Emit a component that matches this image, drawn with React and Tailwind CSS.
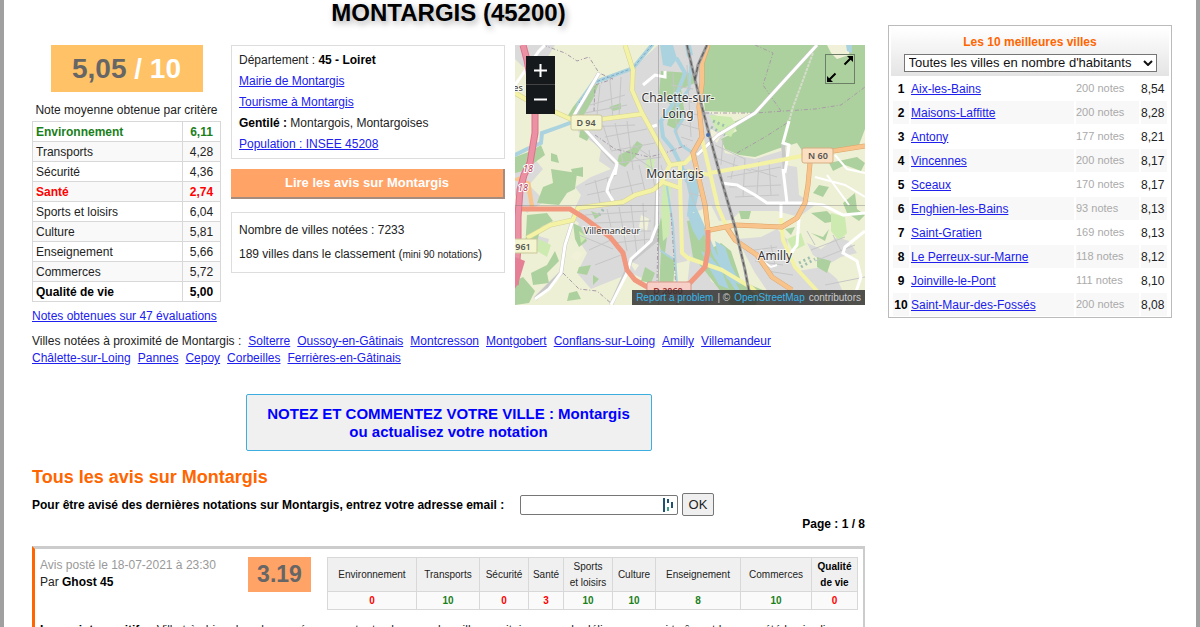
// App.jsx
import React from 'react';

const criteria = [
  { name: 'Environnement', value: '6,11', tone: 'font-bold text-[#1a801a]' },
  { name: 'Transports', value: '4,28' },
  { name: 'Sécurité', value: '4,36' },
  { name: 'Santé', value: '2,74', tone: 'font-bold text-[#ff0000]' },
  { name: 'Sports et loisirs', value: '6,04' },
  { name: 'Culture', value: '5,81' },
  { name: 'Enseignement', value: '5,66' },
  { name: 'Commerces', value: '5,72' },
  { name: 'Qualité de vie', value: '5,00', tone: 'font-bold text-black' },
];

const nearby = [
  'Solterre', 'Oussoy-en-Gâtinais', 'Montcresson', 'Montgobert', 'Conflans-sur-Loing', 'Amilly',
  'Villemandeur', 'Châlette-sur-Loing', 'Pannes', 'Cepoy', 'Corbeilles', 'Ferrières-en-Gâtinais',
];

const ranking = [
  { name: 'Aix-les-Bains', notes: 200, score: '8,54' },
  { name: 'Maisons-Laffitte', notes: 200, score: '8,28' },
  { name: 'Antony', notes: 177, score: '8,21' },
  { name: 'Vincennes', notes: 200, score: '8,17' },
  { name: 'Sceaux', notes: 170, score: '8,17' },
  { name: 'Enghien-les-Bains', notes: 93, score: '8,13' },
  { name: 'Saint-Gratien', notes: 169, score: '8,13' },
  { name: 'Le Perreux-sur-Marne', notes: 118, score: '8,12' },
  { name: 'Joinville-le-Pont', notes: 111, score: '8,10' },
  { name: 'Saint-Maur-des-Fossés', notes: 200, score: '8,08' },
];

const reviewScores = [
  { name: 'Environnement', value: 0, width: 'w-[89px]' },
  { name: 'Transports', value: 10, width: 'w-[63px]' },
  { name: 'Sécurité', value: 0, width: 'w-[49px]' },
  { name: 'Santé', value: 3, width: 'w-[35px]' },
  { name: 'Sports et\u00a0loisirs', value: 10, width: 'w-[49px]' },
  { name: 'Culture', value: 10, width: 'w-[43px]' },
  { name: 'Enseignement', value: 8, width: 'w-[85px]' },
  { name: 'Commerces', value: 10, width: 'w-[71px]' },
  { name: 'Qualité de\u00a0vie', value: 0, width: 'w-[46px]', bold: true },
];

const Link = ({ children, href = '#' }) => (
  <a href={href} className="text-[#2020ee] underline">{children}</a>
);

const ScoreTable = () => (
  <table className="w-full border-collapse leading-4">
    <caption className="pb-[3px] whitespace-nowrap">Note moyenne obtenue par critère</caption>
    <tbody>
      {criteria.map(({ name, value, tone }) => (
        <tr key={name} className={`h-5 even:bg-[#f9f9f9] ${tone || ''}`}>
          <td className="border border-[#d8d8d8] px-[3px] py-0">{name}</td>
          <td className="w-[38px] border border-[#d8d8d8] p-0 text-center">{value}</td>
        </tr>
      ))}
    </tbody>
  </table>
);

const streets = [
  'M75 60L110 50M70 68L112 60M72 82L120 80M85 40L82 70M95 36L98 74M106 32L104 72M88 80L96 105M100 78L108 118M112 76L118 125M90 92L132 84M96 106L140 98M104 118L146 112',
  'M70 140L102 130M72 150L128 138M80 135L85 158M92 132L97 156M112 126L118 150M124 120L130 146M134 105L140 144M146 120L150 136M120 112L144 128M118 100L136 112',
  'M70 170L132 166M80 178L136 176M88 186L136 186M98 198L136 194M92 164L96 182M104 162L112 206M116 160L122 210M128 158L130 206M64 190L98 204M74 205L98 194M80 220L106 210',
  'M200 100L230 114M198 112L236 126M208 94L206 120M220 112L216 134M230 114L228 152M244 116L242 150M254 116L256 150M212 132L266 122M214 142L266 140M220 152L264 150M236 124L262 132',
  'M156 40L178 44M156 52L180 58M160 66L184 70M162 78L184 84M166 92L178 96M158 28L162 90M172 20L176 92M170 130L180 160M174 148L190 152',
  'M232 206L262 202M240 216L268 220M252 226L278 230M256 200L260 220M296 205L330 192M300 216L340 200M292 186L300 200M318 190L326 206M310 240L350 232',
];

const CityMap = () => (
  <svg viewBox="0 0 350 260" preserveAspectRatio="xMidYMid slice" className="block h-full w-full" role="img" aria-label="Carte de Montargis">
    <rect width="350" height="260" fill="#eef0d5" />

    {/* built-up areas */}
    <g fill="#dadada">
      <path d="M78 42L95 32L118 24L130 12L143 0H192L186 30L188 64L200 70L222 82L206 94L210 108L240 114L266 106L270 120L282 122L284 150L300 160L284 172L262 166L226 166L216 175L204 176L196 160L186 165L176 168L180 200L172 216L145 222L142 240L116 228L96 236L76 244L62 228L72 208L60 190L64 178L56 172L66 150L60 142L76 132L96 124L84 116L86 104L76 96L64 88L58 76L64 62Z" />
      <path d="M0 0H40L28 20L8 22L0 14Z" />
      <path d="M0 118L18 112L28 124L14 140L30 156L12 168L0 150Z" />
      <path d="M222 194L246 192L262 184L272 194L274 214L292 236L300 260H262L240 228Z" />
      <path d="M292 198L306 204L322 192L334 196L342 208L326 212L312 220L298 210Z" />
      <path d="M282 226L308 222L322 234L334 260H306Z" />
      <path d="M176 205L190 214L196 236L216 250L190 260H170Z" />
      <path d="M20 190L34 194L30 210L20 204Z" />
    </g>

    {/* forest and parks */}
    <g fill="#add19e">
      <path d="M193 0H350V84L344 100L322 104L290 110L282 98L262 104L240 112L224 110L210 104L206 94L222 86L216 78L240 68L190 66L186 30Z" />
      <path d="M314 118L342 112L350 118L346 126L330 120L318 126Z" />
      <path d="M36 124L62 128L60 144L52 148L44 160L22 158L28 142L38 138Z" />
      <path d="M58 62L72 44L84 38L78 54L70 68L66 74L52 72Z" />
      <path d="M0 112L16 106L26 100L30 110L8 126L0 128Z" />
      <path d="M12 170L32 168L38 176L26 182L20 204L10 206Z" />
      <path d="M36 108L42 110L44 118L36 116ZM66 82L76 88L72 96L64 92ZM56 124L68 122L68 132L58 130ZM94 62L106 58L106 64L98 66Z" />
      <path d="M16 228L32 220L40 206L44 216L32 228L34 238L18 240ZM0 236L8 232L20 246L14 258L0 260Z" />
      <path d="M58 178L66 182L72 196L64 202L60 194ZM64 222L76 220L72 230L62 228ZM54 248L62 246L66 254L52 256ZM76 166L86 170L80 174ZM130 222L140 228L136 238L126 236ZM78 230L84 234L78 240Z" />
      <path d="M146 172L152 192L150 208L160 214L158 244L144 244L146 206L142 190Z" />
      <path d="M172 176L184 174L190 186L192 206L206 198L216 206L226 236L250 246L240 260H216L190 226L178 212Z" />
      <path d="M296 168L312 166L322 176L310 178ZM328 158L340 148L342 164L350 170L344 176L332 168ZM270 184L280 182L276 190ZM296 188L308 192L314 184L310 196ZM302 212L316 216L312 228L302 222ZM304 140L314 142L308 152L298 148ZM224 166L236 166L234 174L226 174Z" />
      <path d="M104 110L116 104L122 96L128 100L120 112L110 122L102 118ZM146 26L176 28L180 38L166 44L170 70L160 84L152 80L156 60L144 50Z" />
    </g>
    <g fill="#cdebb0">
      <path d="M194 70L216 72L222 80L216 92L202 86ZM316 168L330 172L332 188L324 196L316 186ZM272 194L286 188L290 200L278 206ZM148 140L156 140L154 190L148 196L146 166Z" />
      <path d="M24 194L36 200L32 212L22 206ZM64 186L72 192L66 198ZM132 112L140 114L138 126L130 122Z" />
    </g>
    <g fill="#f0f1d8">
      <path d="M312 0H335L334 10L322 14L316 8ZM126 170L134 174L132 186L124 182ZM106 182L114 186L110 192L104 188ZM60 206L68 208L62 216L56 212ZM114 216L124 220L120 226ZM196 84L206 90L202 98L194 92Z" />
    </g>
    <g stroke="#9fbfae" strokeWidth="3" strokeDasharray="2 3">
      <path d="M198 76L212 82M196 82L210 90M284 218L296 212M286 222L300 214M84 170L90 162M40 68L52 72" />
    </g>

    {/* water */}
    <g fill="#aad3df">
      <path d="M145 0H158L162 14L156 22L148 20ZM170 0H176L178 10L172 12ZM331 0H337V8L332 6Z" />
      <path d="M168 124L180 126L184 146L180 166L172 172L174 150Z" />
      <path d="M172 168L180 168L188 180L190 188L184 196L178 186ZM200 196L210 202L216 220L226 240L212 234L204 216Z" />
      <path d="M186 206L194 210L206 224L214 244L204 240L196 226Z" />
    </g>
    <g fill="none" stroke="#aad3df" strokeLinecap="round">
      <path d="M137 0L118 23L78 38L64 58L60 76L44 82L27 88L26 98L12 104L0 110" strokeWidth="4" />
      <path d="M162 14L170 28L164 44L156 62L146 76L148 92L158 104L166 120L172 136" strokeWidth="4" />
      <path d="M176 16L174 44L162 60L168 74L160 86L166 100L178 108" strokeWidth="3" />
      <path d="M178 160L188 182L200 210L222 244" strokeWidth="4" />
      <path d="M152 142L158 180L162 240M146 206L158 214" strokeWidth="2" />
    </g>
    <path d="M137 0L118 23L78 38L64 58" fill="none" stroke="#7da7c4" strokeDasharray="3 2" />

    {/* streets */}
    <g fill="none" stroke="#c6c6c6" strokeWidth="1">
      {streets.map((d) => <path key={d} d={d} />)}
    </g>
    <g fill="none" stroke="#a89ba8" strokeWidth="1" strokeDasharray="4 2 1 2">
      <path d="M28 0L50 8L62 16L74 12L84 28L98 34L80 40L79 66M80 90L100 104L134 112L150 108L172 100" />
      <path d="M240 0L258 8L248 40L266 66M190 68L240 68L300 64L326 60L350 42M222 108L250 92L272 78" />
      <path d="M48 228L64 244L82 246L98 260M144 130L142 240M156 168L162 260" />
    </g>

    {/* minor roads */}
    <g fill="none" stroke="#c8c8c8" strokeWidth="4">
      <path d="M302 0L240 68L203 90L182 110M268 98L270 128M60 70L84 28M66 80L100 118" />
      <path d="M58 175L50 200L46 228L20 254M143 128L140 196L116 216L96 260" />
    </g>
    <path d="M298 8L278 62L272 84" fill="none" stroke="#d5dccb" strokeWidth="2" strokeDasharray="3 1" />
    <g fill="none" stroke="#fff" strokeWidth="3">
      <path d="M302 0L240 68L203 90L182 110M274 76L268 98L274 100L270 128" />
      <path d="M0 40L24 6L30 0M58 72L70 52L84 28M66 80L88 104L102 118L100 130" />
      <path d="M58 175L50 200L46 228L34 244L20 254M102 120L94 138L92 146L98 156" />
      <path d="M143 128L142 180L136 196L116 214L112 228L96 260M128 40L140 30L150 32L150 26M128 70L136 82L142 80" />
      <path d="M206 138L222 140L240 150L252 158L290 158L308 160L328 170L350 168M266 158V174M268 124L272 158" />
      <path d="M284 174L282 200L276 208M350 186L330 202L328 208L342 216L346 232L340 250" />
      <path d="M242 212L256 222L262 220M300 132L330 140L350 152M312 130L334 160M320 110L332 124L350 128" strokeWidth="2" />
    </g>

    {/* yellow and orange roads */}
    <g fill="none" stroke="#d6d19a" strokeWidth="5">
      <path d="M0 48L12 55L40 67L58 75L88 74L127 69M110 0L118 25L117 45L127 68L138 88L155 120L170 118M12 193L35 180L58 175L63 163L108 157L120 150L138 145L148 137L165 143" />
    </g>
    <g fill="none" stroke="#f4f2a4" strokeWidth="4" strokeLinejoin="round">
      <path d="M0 48L12 55L40 67L58 75L88 74L127 69M110 0L118 25L117 45L127 68L138 88L155 120L170 118L180 108" />
      <path d="M12 193L35 180L58 175L63 163L108 157L120 150L138 145L148 137L165 143M165 118V138L167 208L173 213L207 225L237 243L250 256" />
      <path d="M155 120L146 138M195 128L240 120L287 111M186 90L196 132L203 162L212 183M266 173L268 195L280 222L303 247L315 260M172 126L196 130" />
    </g>
    <g fill="none" stroke="#dba468" strokeWidth="5">
      <path d="M193 0L187 18V38L184 62L187 92L178 108L183 130L190 160L193 185M350 101L318 106L287 111M295 118L293 140L290 158L282 173L267 182L220 180L190 186M212 183L220 195L242 210L257 232L277 245" />
    </g>
    <g fill="none" stroke="#f8c48c" strokeWidth="4" strokeLinejoin="round">
      <path d="M193 0L187 18V38L184 62L187 92L178 108L183 130L190 160L193 185M350 101L318 106L300 110L295 118L293 140L290 158L282 173L267 182L220 180L190 186M212 183L220 195L242 210L257 232L277 245" />
      <path d="M0 134L14 138L18 164M3 132L14 148L17 166" strokeWidth="3" />
    </g>
    <path d="M0 164L28 164L55 164L68 172L95 192L108 208L112 225L120 235L132 242L152 248L175 238L190 222L193 205V185" fill="none" stroke="#f1987e" strokeWidth="5" />
    <g fill="none" stroke="#e0708a" strokeWidth="7"><path d="M8 0L12 15L20 60V88L15 118L9 130L5 145L3 172V202L0 240" /></g>
    <g fill="none" stroke="#ea92a4" strokeWidth="5"><path d="M8 0L12 15L20 60V88L15 118L9 130L5 145L3 172V202L0 240" /></g>
    <path d="M0 212L10 216L4 236L0 244Z" fill="#e47f96" />

    {/* railways */}
    <g fill="none" stroke="#999" strokeWidth="3"><path d="M172 0L180 35L187 62L205 130L220 182L230 225L234 246M192 0L183 20L180 35" /></g>
    <g fill="none" stroke="#555" strokeDasharray="5 3"><path d="M172 0L180 35L187 62L205 130L220 182L230 225L234 246M192 0L183 20L180 35" /></g>
    <circle cx="193" cy="90" r="2" fill="#4a6ea8" />
    <path d="M0 160.500H350M143.500 0V260" stroke="#777" strokeOpacity=".4" />

    {/* road shields */}
    <g fontFamily="'Noto Sans', sans-serif" fontSize="9" fontWeight="600" textAnchor="middle" fill="#555">
      <rect x="56" y="70" width="31" height="15" rx="2" fill="#f4f5cf" stroke="#c9c79a" />
      <text x="71" y="81">D 94</text>
      <rect x="287" y="103" width="31" height="15" rx="2" fill="#fadfc0" stroke="#d6ae84" />
      <text x="303" y="114">N 60</text>
      <rect x="-4" y="194" width="26" height="14" fill="#f4f5cf" stroke="#c9c79a" />
      <text x="8" y="205">961</text>
      <rect x="132" y="237" width="44" height="15" rx="2" fill="#f8cfc6" stroke="#d8998c" />
      <text x="153" y="249" fill="#933">D 2060</text>
    </g>
    <g fontFamily="'Noto Sans', sans-serif" fontSize="9" fontStyle="italic" fill="#b33c56" stroke="#fff" strokeWidth="2" paintOrder="stroke">
      <text x="8" y="127">18</text>
      <text x="3" y="146">18</text>
    </g>

    {/* place names */}
    <g fontFamily="'Noto Sans', sans-serif" textAnchor="middle" fill="#333" stroke="#fff" strokeOpacity=".7" strokeWidth="2" paintOrder="stroke">
      <text x="163" y="57" fontSize="12">Chalette-sur-</text>
      <text x="163" y="73" fontSize="12">Loing</text>
      <text x="160" y="133" fontSize="12">Montargis</text>
      <text x="260" y="215" fontSize="12">Amilly</text>
      <text x="97" y="189" fontSize="9">Villemandeur</text>
      <text x="3" y="46" fontSize="9">es</text>
    </g>
  </svg>
);

const MapPanel = () => (
  <div className="relative h-[260px] w-[350px] shrink-0 overflow-hidden">
    <CityMap />
    <div className="absolute left-[11px] top-[11px] flex w-[29px] flex-col bg-[#16191c] text-white">
      <button type="button" aria-label="Zoom avant" className="flex h-[29px] items-center justify-center border-b border-[#444]">
        <svg width="13" height="13" viewBox="0 0 13 13" stroke="currentColor" strokeWidth="2"><path d="M6.500 0V13M0 6.500H13" /></svg>
      </button>
      <button type="button" aria-label="Zoom arrière" className="flex h-[29px] items-center justify-center">
        <svg width="13" height="13" viewBox="0 0 13 13" stroke="currentColor" strokeWidth="2"><path d="M0 6.500H13" /></svg>
      </button>
    </div>
    <button type="button" aria-label="Agrandir la carte" className="absolute right-[10px] top-[9px] size-[30px] border border-[#6d7f66]">
      <svg viewBox="0 0 28 28" className="h-full w-full" fill="#000" stroke="#000">
        <path d="M18.500 9.500L25 3M9.500 18.500L3 25" strokeWidth="2" fill="none" />
        <path d="M21 1H27V7ZM1 21V27H7Z" stroke="none" />
      </svg>
    </button>
    <div className="absolute bottom-0 right-0 flex h-[15px] items-center gap-1 whitespace-nowrap bg-[#333]/85 px-1 text-[10px] leading-[15px] text-[#ccc]">
      <a href="#" className="text-[#38b5ea]">Report a problem</a>
      <span>| ©</span>
      <a href="#" className="text-[#38b5ea]">OpenStreetMap</a>
      <span>contributors</span>
    </div>
  </div>
);

const CityInfo = () => (
  <div className="flex min-w-0 flex-1 flex-col">
    <div className="border border-[#ddd] px-[7px] pt-1 pb-[3px] leading-[21px]">
      <p>Département : <b className="text-black">45 - Loiret</b></p>
      <p><Link>Mairie de Montargis</Link></p>
      <p><Link>Tourisme à Montargis</Link></p>
      <p><b className="text-black">Gentilé :</b> Montargois, Montargoises</p>
      <p><Link>Population : INSEE 45208</Link></p>
    </div>
    <button type="button" className="mt-[10px] h-[30px] border-r-2 border-b-2 border-solid border-[#a58c7d] bg-[#ffa366] text-[13px] font-bold text-white">
      Lire les avis sur Montargis
    </button>
    <div className="mt-[13px] border border-[#ddd] px-[7px] py-[5px] leading-6">
      <p>Nombre de villes notées : 7233</p>
      <p className="whitespace-nowrap">189 villes dans le classement (<span className="text-[10px]">mini 90 notations</span>)</p>
    </div>
  </div>
);

const TopCities = () => (
  <aside className="mt-[25px] w-[284px] shrink-0 self-start border border-[#bbb] px-[2px] pt-[2px]">
    <div className="flex flex-col items-center bg-gradient-to-b from-white to-[#e4e4e4] pt-1 pb-1">
      <h2 className="font-bold leading-5 text-[#ff6600]">Les 10 meilleures villes</h2>
      <div className="relative mt-[2px] w-[253px]">
        <select aria-label="Nombre d'habitants" className="block h-[18px] w-full appearance-none border border-[#767676] bg-white px-1 text-[13px] leading-4 text-[#111]">
          <option>Toutes les villes en nombre d'habitants</option>
        </select>
        <svg viewBox="0 0 10 6" className="pointer-events-none absolute right-1 top-[6px] h-[6px] w-[10px]" fill="none" stroke="#111" strokeWidth="2">
          <path d="M1 1L5 5L9 1" />
        </svg>
      </div>
    </div>
    <table className="w-full border-separate border-spacing-x-[2px] border-spacing-y-[1px]">
      <tbody>
        {ranking.map(({ name, notes, score }, index) => (
          <tr key={name} className="h-[23px] even:bg-[#f8f8f8]">
            <td className="w-4 p-0 text-center font-bold text-black">{index + 1}</td>
            <td className="p-0"><Link>{name}</Link></td>
            <td className="w-[63px] p-0 text-[11px] text-[#aaa]">{notes} notes</td>
            <td className="w-[26px] p-0">{score}</td>
          </tr>
        ))}
      </tbody>
    </table>
  </aside>
);

const Review = () => (
  <article className="mt-[13px] border-l-[3px] border-t-[3px] border-r-2 border-l-[#ff6600] border-t-[#ccc] border-r-[#ccc] px-[5px] pt-2">
    <div className="flex items-start">
      <div className="w-[208px] shrink-0 leading-[17px]">
        <p className="text-[#999]">Avis posté le 18-07-2021 à 23:30</p>
        <p>Par <b className="text-black">Ghost 45</b></p>
      </div>
      <div className="flex h-[35px] w-[63px] shrink-0 items-center justify-center bg-[#ffa366] text-[23px] font-bold text-[#666]">3.19</div>
      <table className="ml-auto table-fixed border-collapse text-center text-[10px] leading-4 text-[#222]">
        <thead>
          <tr className="h-[34px] bg-[#f0f0f0]">
            {reviewScores.map(({ name, width, bold }) => (
              <th key={name} className={`${width} border border-[#d8d8d8] p-0 ${bold ? 'font-bold text-black' : 'font-normal'}`}>{name}</th>
            ))}
          </tr>
        </thead>
        <tbody>
          <tr className="h-[18px] bg-[#fafafa]">
            {reviewScores.map(({ name, value }) => (
              <td key={name} className={`border border-[#d8d8d8] p-0 font-bold ${value > 5 ? 'text-[#1a801a]' : 'text-[#ff0000]'}`}>{value}</td>
            ))}
          </tr>
        </tbody>
      </table>
    </div>
    <p className="mt-3 leading-[17px]">
      <b className="text-black">Les points positifs :</b> Ville très bien dans le passé, comme toutes les grandes villes sanitaires, pas de délinquance qui traîne et les rues été les jardins
    </p>
  </article>
);

const App = () => (
  <div className="flex h-screen items-start gap-[23px] overflow-hidden border-x-4 border-[#a0a0a0] bg-white pl-7 pr-6 font-['Liberation_Sans',Arial,sans-serif] text-xs text-[#222]">
    <main className="min-w-0 flex-1">
      <h1 className="text-center text-2xl font-bold leading-[25px] text-black [text-shadow:2px_3px_6px_#aaa]">MONTARGIS (45200)</h1>

      <section className="mt-5 flex items-start gap-[10px]">
        <div className="w-[189px] shrink-0">
          <div className="mx-auto mb-[10px] flex h-[47px] w-[152px] items-center justify-center bg-[#ffc266] text-[28px] font-bold text-white">
            <span className="text-[#666]">5,05</span>&nbsp;/ 10
          </div>
          <ScoreTable />
        </div>
        <CityInfo />
        <MapPanel />
      </section>

      <p className="mt-[3px] leading-[17px]"><Link href="#avis">Notes obtenues sur 47 évaluations</Link></p>
      <div className="mt-2 flex flex-wrap gap-x-[7px] pr-10 leading-[17px]">
        <span>Villes notées à proximité de Montargis :</span>
        {nearby.map((city) => <Link key={city}>{city}</Link>)}
      </div>

      <button type="button" className="mx-auto mt-[27px] block h-[57px] w-[406px] rounded-[2px] border border-solid border-[#3daee0] bg-[#f0f0f0] text-[15px] font-bold leading-[18px] text-[#0000ff]">
        NOTEZ ET COMMENTEZ VOTRE VILLE : Montargis<br />ou actualisez votre notation
      </button>

      <h2 id="avis" className="mt-[14px] text-lg font-bold leading-6 text-[#ff6600]">Tous les avis sur Montargis</h2>
      <form className="mt-1 flex items-center gap-1">
        <label htmlFor="email" className="w-[484px] whitespace-nowrap font-bold text-black">
          Pour être avisé des dernières notations sur Montargis, entrez votre adresse email :
        </label>
        <div className="relative w-[158px]">
          <input id="email" type="email" className="block h-5 w-full rounded-[2px] border border-[#767676] px-1 pr-5" />
          <svg viewBox="0 0 12 14" className="pointer-events-none absolute right-1 top-[3px] h-[14px] w-3" fill="#1f5270">
            <path d="M1 0h2v14H1zM5 1h2v4H5zM9 4h2v6H9z" />
            <path d="M5 9h2v4H5z" fill="#3f9f8f" />
          </svg>
        </div>
        <button type="submit" className="h-[23px] w-8 rounded-[2px] border border-solid border-[#767676] bg-[#efefef] text-[13px]">OK</button>
      </form>
      <p className="text-right font-bold leading-[17px] text-black">Page : 1 / 8</p>

      <Review />
    </main>
    <TopCities />
  </div>
);

export default App;
